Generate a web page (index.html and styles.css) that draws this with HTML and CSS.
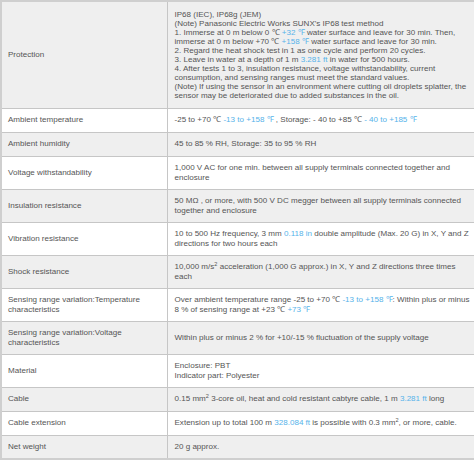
FILE: index.html
```html
<!DOCTYPE html>
<html lang="en">
<head>
<meta charset="utf-8">
<title>Specifications</title>
<link rel="stylesheet" href="styles.css">
</head>
<body>
<table class="spec">
  <colgroup><col class="col-label"><col class="col-value"></colgroup>
  <tbody>
    <tr>
      <td class="label">Protection</td>
      <td class="value protection">IP68 (IEC), IP68g (JEM)<br>(Note) Panasonic Electric Works SUNX's IP68 test method<br>1. Immerse at 0 m below 0 ℃ <span class="imp">+32 ℉</span> water surface and leave for 30 min. Then, immerse at 0 m below +70 ℃ <span class="imp">+158 ℉</span> water surface and leave for 30 min.<br>2. Regard the heat shock test in 1 as one cycle and perform 20 cycles.<br>3. Leave in water at a depth of 1 m <span class="imp">3.281 ft</span> in water for 500 hours.<br>4. After tests 1 to 3, insulation resistance, voltage withstandability, current consumption, and sensing ranges must meet the standard values.<br>(Note) If using the sensor in an environment where cutting oil droplets splatter, the sensor may be deteriorated due to added substances in the oil.</td>
    </tr>
    <tr>
      <td class="label">Ambient temperature</td>
      <td class="value">-25 to +70 ℃ <span class="imp">-13 to +158 ℉</span> , Storage: - 40 to +85 ℃ <span class="imp">- 40 to +185 ℉</span></td>
    </tr>
    <tr>
      <td class="label">Ambient humidity</td>
      <td class="value">45 to 85 % RH, Storage: 35 to 95 % RH</td>
    </tr>
    <tr>
      <td class="label">Voltage withstandability</td>
      <td class="value">1,000 V AC for one min. between all supply terminals connected together and enclosure</td>
    </tr>
    <tr>
      <td class="label">Insulation resistance</td>
      <td class="value">50 MΩ , or more, with 500 V DC megger between all supply terminals connected together and enclosure</td>
    </tr>
    <tr>
      <td class="label">Vibration resistance</td>
      <td class="value">10 to 500 Hz frequency, 3 mm <span class="imp">0.118 in</span> double amplitude (Max. 20 G) in X, Y and Z directions for two hours each</td>
    </tr>
    <tr>
      <td class="label">Shock resistance</td>
      <td class="value">10,000 m/s<sup>2</sup> acceleration (1,000 G approx.) in X, Y and Z directions three times each</td>
    </tr>
    <tr>
      <td class="label">Sensing range variation:Temperature characteristics</td>
      <td class="value">Over ambient temperature range -25 to +70 ℃ <span class="imp">-13 to +158 ℉</span>: Within plus or minus 8 % of sensing range at +23 ℃ <span class="imp">+73 ℉</span></td>
    </tr>
    <tr>
      <td class="label">Sensing range variation:Voltage characteristics</td>
      <td class="value">Within plus or minus 2 % for +10/-15 % fluctuation of the supply voltage</td>
    </tr>
    <tr>
      <td class="label">Material</td>
      <td class="value">Enclosure: PBT<br>Indicator part: Polyester</td>
    </tr>
    <tr>
      <td class="label">Cable</td>
      <td class="value">0.15 mm<sup>2</sup> 3-core oil, heat and cold resistant cabtyre cable, 1 m <span class="imp">3.281 ft</span> long</td>
    </tr>
    <tr>
      <td class="label">Cable extension</td>
      <td class="value">Extension up to total 100 m <span class="imp">328.084 ft</span> is possible with 0.3 mm<sup>2</sup>, or more, cable.</td>
    </tr>
    <tr>
      <td class="label">Net weight</td>
      <td class="value">20 g approx.</td>
    </tr>
  </tbody>
</table>
</body>
</html>
```

FILE: styles.css
```css
html, body {
  margin: 0;
  padding: 0;
  background: #ffffff;
}

.spec {
  width: 474px;
  table-layout: fixed;
  border-collapse: collapse;
  border: 2px solid #cfcfcf;
  font-family: "Liberation Sans", Arial, sans-serif;
  font-size: 8.05px;
  color: #555555;
}

.col-label {
  width: 166px;
}

.col-value {
  width: 308px;
}

.spec tr {
  height: 24px;
}

.spec td {
  border: 1px solid #c6c6c6;
  padding: 6px 2px 6px 7px;
  line-height: 10px;
  vertical-align: middle;
  text-align: left;
  background: #ffffff;
}

.spec tr:nth-child(odd) td {
  background: #efefef;
}

.spec .label {
  padding-left: 6px;
  padding-right: 6px;
}

.spec .protection {
  line-height: 9.1px;
  padding-top: 7.5px;
  padding-bottom: 7.5px;
}

.imp {
  color: #56b3ea;
}

.spec sup {
  font-size: 5.6px;
  line-height: 0;
  vertical-align: 3px;
}
```
